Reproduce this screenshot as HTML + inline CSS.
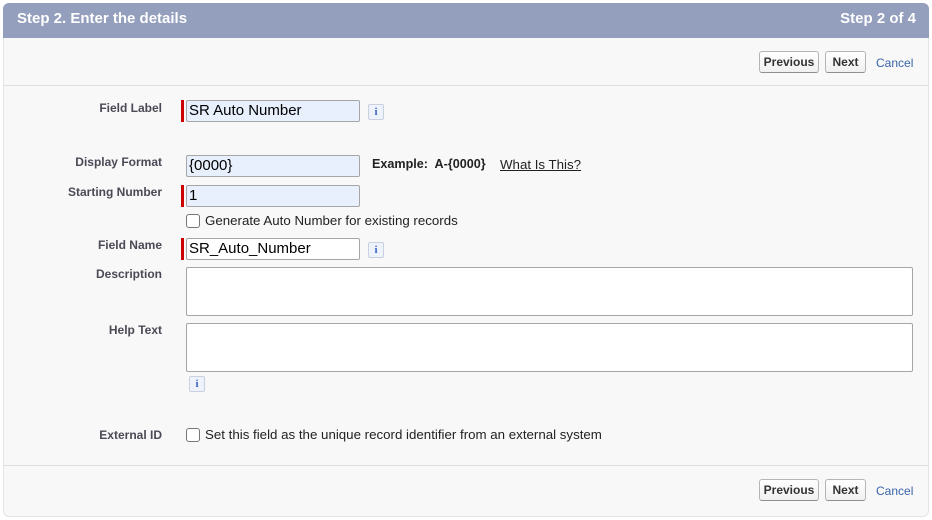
<!DOCTYPE html>
<html><head><style>
body{margin:0;width:932px;height:520px;background:#fff;font-family:"Liberation Sans",Arial,sans-serif;position:relative;overflow:hidden}
.a{position:absolute}
.panel{left:3px;top:3px;width:926px;height:514px;background:#f8f8f8;border:1px solid #e4e4e4;border-radius:6px;box-sizing:border-box}
.hdr{left:3px;top:3px;width:926px;height:35px;background:#949fbd;border-radius:6px 6px 0 0}
.ht{color:#fff;font-weight:bold;font-size:15px;top:10px}
.sep{left:4px;width:924px;height:1px;background:#dedede}
.btn{height:22px;box-sizing:border-box;border:1px solid #b5b5b5;border-bottom-color:#8f8f8f;border-radius:3px;background:linear-gradient(#fff,#f0f0f0);font-size:12px;font-weight:bold;color:#333;text-align:center;line-height:20px}
.cancel{font-size:12px;color:#3a64a8}
.lbl{font-size:12px;font-weight:bold;color:#4a4a56;text-align:right;width:162px;left:0}
.inp{left:186px;width:174px;height:22px;box-sizing:border-box;border:1px solid #a6a6a6;border-radius:2px;background:#e8f0fe;font-size:15px;padding-left:2px;line-height:20px;color:#000}
.req{left:181px;width:3px;height:22px;background:#c00}
.info{width:16px;height:16px;box-sizing:border-box;border:1px solid #c9d1e0;border-radius:2px;background:#eef2fa;color:#3a64c8;font-family:"Liberation Serif",serif;font-weight:bold;font-size:11px;text-align:center;line-height:14px}
.ta{left:186px;width:727px;height:49px;box-sizing:border-box;border:1px solid #a6a6a6;border-radius:2px;background:#fff}
.cb{width:14px;height:14px;box-sizing:border-box;border:1px solid #777;border-radius:3px;background:#fff}
.txt{font-size:13.3px;color:#222}
</style></head><body>
<div class="a panel"></div>
<div class="a hdr"></div>
<div class="a ht" style="left:17px">Step 2. Enter the details</div>
<div class="a ht" style="right:16px">Step 2 of 4</div>
<div class="a btn" style="left:759px;top:51px;width:60px">Previous</div>
<div class="a btn" style="left:825px;top:51px;width:41px">Next</div>
<div class="a cancel" style="left:876px;top:56px">Cancel</div>
<div class="a sep" style="top:85px"></div>

<div class="a lbl" style="top:101px">Field Label</div>
<div class="a req" style="top:100px"></div>
<div class="a inp" style="top:100px">SR Auto Number</div>
<div class="a info" style="left:368px;top:104px">i</div>

<div class="a lbl" style="top:155px">Display Format</div>
<div class="a inp" style="top:155px">{0000}</div>
<div class="a txt" style="left:372px;top:157px;font-weight:bold;font-size:12.6px">Example:&nbsp; A-{0000}</div>
<div class="a txt" style="left:500px;top:157px;text-decoration:underline">What Is This?</div>

<div class="a lbl" style="top:185px">Starting Number</div>
<div class="a req" style="top:185px"></div>
<div class="a inp" style="top:185px">1</div>

<div class="a cb" style="left:186px;top:214px"></div>
<div class="a txt" style="left:205px;top:213px">Generate Auto Number for existing records</div>

<div class="a lbl" style="top:238px">Field Name</div>
<div class="a req" style="top:238px"></div>
<div class="a inp" style="top:238px;background:#fff">SR_Auto_Number</div>
<div class="a info" style="left:368px;top:242px">i</div>

<div class="a lbl" style="top:267px">Description</div>
<div class="a ta" style="top:267px"></div>
<div class="a lbl" style="top:323px">Help Text</div>
<div class="a ta" style="top:323px"></div>
<div class="a info" style="left:189px;top:376px">i</div>

<div class="a lbl" style="top:428px">External ID</div>
<div class="a cb" style="left:186px;top:428px"></div>
<div class="a txt" style="left:205px;top:427px">Set this field as the unique record identifier from an external system</div>

<div class="a sep" style="top:465px"></div>
<div class="a btn" style="left:759px;top:479px;width:60px">Previous</div>
<div class="a btn" style="left:825px;top:479px;width:41px">Next</div>
<div class="a cancel" style="left:876px;top:484px">Cancel</div>
</body></html>
